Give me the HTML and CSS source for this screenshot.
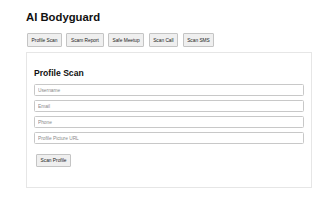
FILE: index.html
```html
<!DOCTYPE html>
<html>
<head>
    <title>AI Bodyguard</title>
    <link rel="stylesheet" href="styles.css">
</head>
<body>
    <div class="app">
        <h1>AI Bodyguard</h1>
        <div class="tabs">
            <button class="tab">Profile Scan</button>
            <button class="tab">Scam Report</button>
            <button class="tab">Safe Meetup</button>
            <button class="tab">Scan Call</button>
            <button class="tab">Scan SMS</button>
        </div>
        <div class="panel">
            <h2>Profile Scan</h2>
            <input type="text" placeholder="Username">
            <input type="email" placeholder="Email">
            <input type="text" placeholder="Phone">
            <input type="text" placeholder="Profile Picture URL">
            <button class="submit">Scan Profile</button>
        </div>
    </div>
</body>
</html>
```

FILE: styles.css
```css
body {
    margin: 0;
    font-family: "Liberation Sans", Arial, sans-serif;
    background: #fff;
}
.app {
    width: 286px;
    padding: 11px 0 0 26px;
}
h1 {
    font-size: 11.3px;
    line-height: 13px;
    margin: 0 0 9px 0;
    color: #111;
}
.tabs {
    display: flex;
    gap: 4.3px;
    margin-bottom: 5px;
    padding-left: 1px;
}
.tab, .submit {
    font-family: "Liberation Sans", Arial, sans-serif;
    font-size: 4.8px;
    height: 14px;
    padding: 0 3.6px;
    background: #efefef;
    border: 1px solid #c4c4c4;
    border-radius: 1px;
    color: #222;
}
.panel {
    border: 1px solid #e6e6e6;
    padding: 15px 7px 20px 7px;
}
h2 {
    font-size: 8.6px;
    line-height: 10px;
    margin: 0 0 6px 0;
    color: #111;
}
input {
    display: block;
    box-sizing: border-box;
    width: 100%;
    height: 12px;
    margin-bottom: 4px;
    padding: 0 3px;
    font-family: "Liberation Sans", Arial, sans-serif;
    font-size: 4.8px;
    border: 1px solid #c8c8c8;
    border-radius: 1.5px;
}
input::placeholder {
    color: #8a8a8a;
}
.submit {
    margin: 1px 0 0 2px;
    height: 13px;
}
```
